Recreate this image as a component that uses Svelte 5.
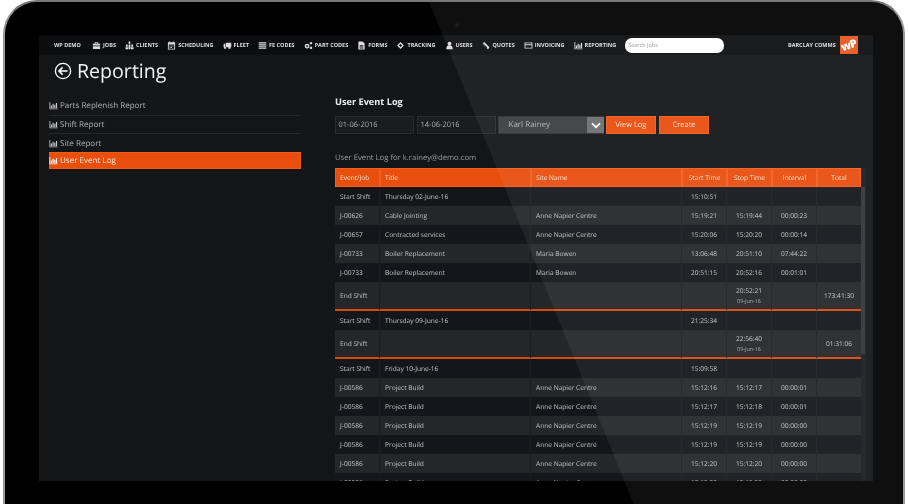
<script>
  const nav = [
    ['jobs', 'Jobs'], ['clients', 'Clients'], ['cal', 'Scheduling'], ['truck', 'Fleet'],
    ['list', 'FE Codes'], ['cogs', 'Part Codes'], ['file', 'Forms'], ['track', 'Tracking'],
    ['user', 'Users'], ['clip', 'Quotes'], ['card', 'Invoicing'], ['chart', 'Reporting']
  ];
  const reports = ['Parts Replenish Report', 'Shift Report', 'Site Report', 'User Event Log'];
  const A = 'Anne Napier Centre';
  const rows = [
    ['Start Shift', 'Thursday 02-June-16', '', '15:10:51', '', '', ''],
    ['J-00626', 'Cable Jointing', A, '15:19:21', '15:19:44', '00:00:23', ''],
    ['J-00657', 'Contracted services', A, '15:20:06', '15:20:20', '00:00:14', ''],
    ['J-00733', 'Boiler Replacement', 'Maria Bowen', '13:06:48', '20:51:10', '07:44:22', ''],
    ['J-00733', 'Boiler Replacement', 'Maria Bowen', '20:51:15', '20:52:16', '00:01:01', ''],
    ['End Shift', '', '', '', '20:52:21', '', '173:41:30', '09-Jun-16'],
    ['Start Shift', 'Thursday 09-June-16', '', '21:25:34', '', '', ''],
    ['End Shift', '', '', '', '22:56:40', '', '01:31:06', '09-Jun-16'],
    ['Start Shift', 'Friday 10-June-16', '', '15:09:58', '', '', ''],
    ['J-00586', 'Project Build', A, '15:12:16', '15:12:17', '00:00:01', ''],
    ['J-00586', 'Project Build', A, '15:12:17', '15:12:18', '00:00:01', ''],
    ['J-00586', 'Project Build', A, '15:12:19', '15:12:19', '00:00:00', ''],
    ['J-00586', 'Project Build', A, '15:12:19', '15:12:19', '00:00:00', ''],
    ['J-00586', 'Project Build', A, '15:12:20', '15:12:20', '00:00:00', ''],
    ['J-00586', 'Project Build', A, '15:12:20', '15:12:20', '00:00:00', '']
  ];
  const heads = ['Event/Job', 'Title', 'Site Name', 'Start Time', 'Stop Time', 'Interval', 'Total'];
  const paths = {
    jobs: 'M1 3h2V1.5h4V3h2v2H1zM4 2.2V3h2v-.8zM1 5.7h8V9H1z',
    clients: 'M4 0.5h2v2.5H4zM1 4h2v2.5H1zM4 3.8h2v5.4H4zM7 4h2v2.5H7zM0.5 7h3v2.2h-3zM6.5 7h3v2.2h-3z',
    cal: 'M1 1.5h1.5V.5h1v1h3v-1h1v1H9V9.5H1zM2 4v4.5h6V4z M3 5h1v1H3z M4.6 5h1v1h-1z M6.2 5h1v1h-1z M3 6.8h1v1H3z M4.6 6.8h1v1h-1z',
    truck: 'M3.2 2h6v5H3.2zM.6 4l2-1.4V7H.6zM1.2 7h2.2v1.6H1.2zM6 7h2.4v1.6H6z',
    list: 'M.8 1.5h8.4v1.4H.8zM.8 3.7h8.4v1.4H.8zM.8 5.9h8.4v1.4H.8zM.8 8h8.4v1H.8z',
    cogs: 'M3.4 3a2.6 2.6 0 1 0 .01 0zM3.4 4.6a1 1 0 1 1-.01 0zM7.8 1a1.4 1.4 0 1 0 .01 0zM7.8 6.2a1.4 1.4 0 1 0 .01 0z',
    file: 'M1.5.5h4.6l2.4 2.4v6.6h-7zM3 4.4h4v.9H3zM3 6h4v.9H3zM3 7.5h4v.8H3z',
    track: 'M5 1.2 8.8 5 5 8.8 1.2 5zM5 3.2 3.2 5 5 6.8 6.8 5z',
    user: 'M5 .8a2.1 2.1 0 1 1-.01 0zM1.4 9.2c0-3 1.2-4 2.2-4.3h2.8c1 .3 2.2 1.3 2.2 4.3z',
    clip: 'M2 2.4 3.6 1l5.2 5.4c.8 1 .2 2.6-1.4 2.6L2.2 4c-.6-.6-.2-1.2.4-1.2L7 7.2l-.8.5L2.8 3.8z',
    card: 'M.6 1.6h8.8v6.8H.6zM1.6 2.6v1h6.8v-1zM1.6 4.6v2.8h6.8V4.6z',
    chart: 'M.5 1h.9v7.2h8.1v.9H.5zM2 5h1.3v2.7H2zM3.9 3h1.3v4.7H3.9zM5.8 4.2h1.3v3.5H5.8zM7.7 2.2H9v5.5H7.7z'
  };
</script>

{#snippet icon(name, cls)}
  <svg class={cls} viewBox="0 0 10 10" aria-hidden="true"><path fill-rule="evenodd" d={paths[name]} /></svg>
{/snippet}

<div class="page">
  <div class="device">
    <span class="camera"></span>
    <div class="screen">
      <nav class="nav">
        <strong class="brand">WP Demo</strong>
        {#each nav as [ic, label]}
          <span class="item">{@render icon(ic, 'nav-ic')}{label}</span>
        {/each}
        <span class="search">Search Jobs</span>
        <span class="company">Barclay Comms</span>
        <span class="logo"><b>wP</b></span>
      </nav>

      <header class="title">
        <svg class="back" viewBox="0 0 18 18" aria-hidden="true">
          <circle cx="9" cy="9" r="7.6" fill="none" stroke="#fff" stroke-width="1.3" />
          <path d="M13.6 9H5.2M8.6 5.4 5 9l3.6 3.6" fill="none" stroke="#fff" stroke-width="1.6" />
        </svg>
        <h1>Reporting</h1>
      </header>

      <div class="content">
        <ul class="side">
          {#each reports as r, i}
            <li class:active={i === 3}>{@render icon('chart', 'side-ic')}{r}</li>
          {/each}
        </ul>

        <section class="main">
          <h2>User Event Log</h2>
          <div class="filters">
            <span class="field">01-06-2016</span>
            <span class="field">14-06-2016</span>
            <span class="select">
              <span class="sel-text">Karl Rainey</span>
              <span class="chev">
                <svg viewBox="0 0 12 8" aria-hidden="true"><path d="M1.2 1.4 6 6l4.8-4.6" fill="none" stroke="#fff" stroke-width="2.2" /></svg>
              </span>
            </span>
            <span class="btn view">View Log</span>
            <span class="btn create">Create</span>
          </div>
          <p class="for">User Event Log for k.rainey@demo.com</p>

          <div class="table-wrap">
            <table>
              <colgroup>
                <col class="c1" /><col class="c2" /><col class="c3" /><col class="c4" /><col class="c4" /><col class="c4" /><col class="c7" />
              </colgroup>
              <thead>
                <tr>
                  {#each heads as h, i}<th class:ctr={i > 2}>{h}</th>{/each}
                </tr>
              </thead>
              <tbody>
                {#each rows as r}
                  <tr class:end={r[0] === 'End Shift'}>
                    <td>{r[0]}</td>
                    <td>{r[1]}</td>
                    <td>{r[2]}</td>
                    <td class="ctr">{r[3]}</td>
                    <td class="ctr">{r[4]}{#if r[7]}<small>{r[7]}</small>{/if}</td>
                    <td class="ctr">{r[5]}</td>
                    <td class="ctr">{r[6]}</td>
                  </tr>
                {/each}
              </tbody>
            </table>
            <div class="track"><div class="thumb"></div></div>
          </div>
        </section>
      </div>
    </div>
    <div class="glare"></div>
  </div>
</div>

<style>
  :global(html), :global(body) { margin: 0; background: #fff; overflow: hidden; }
  * { box-sizing: border-box; }
  .page {
    width: 908px; height: 504px; overflow: hidden; padding-left: 3px;
    font-family: "Open Sans", "Liberation Sans", sans-serif; color: #d8d8d8;
    text-rendering: geometricPrecision;
  }
  .device {
    position: relative; width: 902px; height: 522px;
    background: #000; border: 2px solid #999; border-bottom: 0;
    border-top-color: #777; border-radius: 34px 34px 0 0;
    padding: 33px 30px 0 34px;
  }
  .camera {
    position: absolute; left: 450px; top: 21px; width: 4px; height: 4px;
    border-radius: 50%; background: #0e0f10;
  }
  .glare {
    position: absolute; inset: 0; pointer-events: none;
    background: rgba(255, 255, 255, .058);
    clip-path: polygon(424px 0, 100% 0, 100% 100%, 636px 100%);
    border-radius: 0 32px 0 0;
  }
  .screen { height: 446px; overflow: hidden; background: #141517; filter: blur(.3px); }

  .nav {
    display: flex; align-items: center; height: 20px; padding: 0 15px;
    background: #0c0d0f; color: #dedede;
    font-size: 5.5px; font-weight: 700; text-transform: uppercase; white-space: nowrap;
  }
  .brand { width: 38px; font-weight: 700; }
  .item { display: flex; align-items: center; gap: 2px; margin-right: 9px; }
  .nav-ic { width: 9px; height: 9px; fill: #dedede; flex: none; }
  .search {
    width: 99px; height: 15px; border-radius: 7px;
    background: #fff; color: #999; padding-left: 3px; line-height: 15px;
    font-weight: 400; text-transform: none; font-size: 5.5px;
  }
  .company { margin-left: auto; width: 52px; }
  .logo {
    width: 18px; height: 18px; background: #e8571c; color: #fff; flex: none;
    display: flex; align-items: center; justify-content: center;
  }
  .logo b { font-size: 11px; line-height: 1; font-weight: 800; text-transform: none; transform: rotate(-18deg); letter-spacing: -.8px; }

  .title { display: flex; align-items: center; gap: 5px; height: 32px; padding-left: 15px; }
  .back { width: 18px; height: 18px; flex: none; }
  h1 { margin: 0; font-size: 19.6px; font-weight: 400; color: #f2f2f2; line-height: 32px; }

  .content { display: flex; align-items: flex-start; padding-top: 9px; }
  .side { list-style: none; margin: 0 0 0 10px; padding: 1px 0 0; width: 252px; font-size: 8.05px; color: #b4b4b4; }
  .side li {
    display: flex; align-items: center; gap: 2px; height: 18.5px;
    border-bottom: 1px solid #26272a;
  }
  .side li:nth-child(3) { border-bottom: 0; height: 18px; }
  .side li.active { background: #e84e0c; color: #ffe9df; border: 1px solid #f0591a; height: 17px; }
  .side-ic { width: 9px; height: 9px; fill: #c8c8c8; flex: none; }
  .side li.active .side-ic { fill: #fff; margin-left: -1px; }

  .main { margin-left: 34px; width: 532px; }
  h2 { margin: 0; font-size: 9.2px; font-weight: 700; color: #ececec; line-height: 12px; height: 20px; }
  .filters { display: flex; height: 18px; font-size: 7.5px; color: #b0b0b0; }
  .field {
    width: 79px; margin-right: 3px; padding-left: 2.5px; line-height: 17px;
    background: #1b1c1e; border: 1px solid #2a2b2d;
  }
  .select {
    display: flex; width: 106px; margin-right: 2px; margin-left: -1px; background: #3c3d3f;
    border: 1px solid #2e2f31; color: #b4b4b4; font-size: 8px; line-height: 16px;
  }
  .sel-text { flex: 1; padding-left: 9.5px; }
  .chev { width: 17px; background: #6d6e70; display: flex; align-items: center; justify-content: center; margin-right: -1px; }
  .chev svg { width: 10px; height: 7px; }
  .btn {
    background: #e84e0c; border: 1px solid #f05c1c; color: #f7e5dc;
    text-align: center; line-height: 16px;
  }
  .view { width: 50px; margin-right: 3px; }
  .create { width: 50px; }
  .for { margin: 0; font-size: 7.7px; color: #9a9a9a; padding-top: 18px; line-height: 12px; height: 34px; }

  .table-wrap { display: flex; align-items: stretch; }
  table { width: 526px; table-layout: fixed; border-collapse: separate; border-spacing: 0; font-size: 6.6px; color: #c4c4c4; }
  .c1 { width: 45px; } .c2, .c3 { width: 151px; } .c4 { width: 45px; } .c7 { width: 44px; }
  th {
    height: 19px; padding: 0 0 0 4px; text-align: left; font-weight: 400; color: #fbe0d2;
    background: #e84e0c; border: 1px solid #f25f1f;
  }
  td {
    height: 19px; padding: 1px 0 0 5px; border-right: 1px solid #1c1d1f; line-height: 10px;
    background: #15161a; overflow: hidden; white-space: nowrap;
  }
  td:last-child { border-right: 0; }
  tr:nth-child(even) td { background: #252628; }
  tr.end td { height: 29px; border-bottom: 2px solid #d64a0e; }
  td.ctr { text-align: center; padding: 1px 0 0; }
  th.ctr { text-align: center; padding: 0; }
  small { display: block; font-size: 5.4px; line-height: 10px; color: #a8a8a8; }

  .track { width: 5px; background: #1b1c1e; }
  .thumb { width: 4px; height: 167px; margin-top: 19px; background: #343537; }
</style>
